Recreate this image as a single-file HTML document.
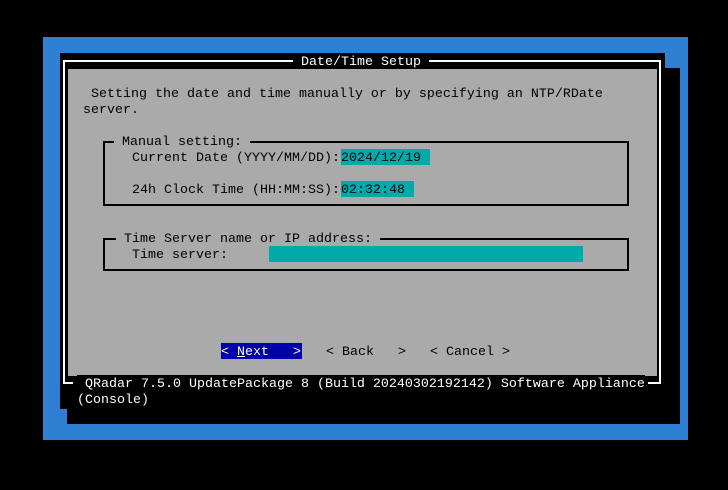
<!DOCTYPE html>
<html><head><style>
body{margin:0;background:#000;width:728px;height:490px;position:relative;overflow:hidden;font-family:"Liberation Mono","DejaVu Sans Mono",monospace;font-size:13.33px;}
div{position:absolute;box-sizing:border-box}
.t{white-space:pre;line-height:16px;height:16px;color:#000;padding-top:2px}
.w{color:#fff}
</style></head><body>
<div style="left:43px;top:37px;width:645px;height:403px;background:#2f80d2"></div>
<div style="left:67px;top:68px;width:613px;height:356px;background:#000"></div>
<div style="left:60px;top:53px;width:605px;height:356px;background:#000"></div>
<div style="left:68px;top:69px;width:589px;height:307px;background:#aaa"></div>
<div style="left:63px;top:60px;width:598px;height:2px;background:#fff"></div>
<div style="left:63px;top:60px;width:2px;height:324px;background:#fff"></div>
<div style="left:659px;top:60px;width:2px;height:324px;background:#fff"></div>
<div style="left:63px;top:382px;width:10px;height:2px;background:#fff"></div>
<div style="left:648px;top:382px;width:13px;height:2px;background:#fff"></div>
<div class="t w" style="left:293px;top:53px;background:#000"> Date/Time Setup </div>
<div class="t" style="left:91px;top:85px">Setting the date and time manually or by specifying an NTP/RDate</div>
<div class="t" style="left:83px;top:101px">server.</div>
<div style="left:103px;top:141px;width:526px;height:65px;border:2px solid #000"></div>
<div class="t" style="left:114px;top:133px;background:#aaa"> Manual setting: </div>
<div class="t" style="left:132px;top:149px">Current Date (YYYY/MM/DD):</div>
<div class="t" style="left:341px;top:149px;width:89px;background:#00aaaa">2024/12/19</div>
<div class="t" style="left:132px;top:181px">24h Clock Time (HH:MM:SS):</div>
<div class="t" style="left:341px;top:181px;width:73px;background:#00aaaa">02:32:48</div>
<div style="left:103px;top:238px;width:526px;height:33px;border:2px solid #000"></div>
<div class="t" style="left:116px;top:230px;background:#aaa"> Time Server name or IP address: </div>
<div class="t" style="left:132px;top:246px">Time server:</div>
<div style="left:269px;top:246px;width:314px;height:16px;background:#00aaaa"></div>
<div class="t w" style="left:221px;top:343px;width:81px;background:#0000aa">&lt; <span style="text-decoration:underline">N</span>ext   &gt;</div>
<div class="t" style="left:326px;top:343px">&lt; Back   &gt;</div>
<div class="t" style="left:430px;top:343px">&lt; Cancel &gt;</div>
<div class="t w" style="left:77px;top:375px;background:#000"> QRadar 7.5.0 UpdatePackage 8 (Build 20240302192142) Software Appliance</div>
<div class="t w" style="left:77px;top:391px">(Console)</div>
</body></html>
